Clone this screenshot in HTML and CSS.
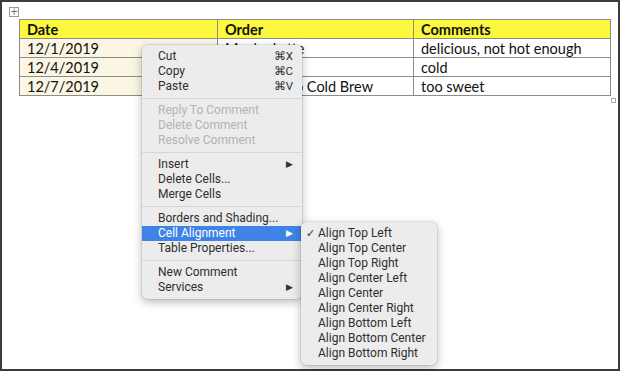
FILE: index.html
```html
<!DOCTYPE html>
<html lang="en">
<head>
    <meta charset="UTF-8">
    <title>Cell Alignment</title>
    <link rel="stylesheet" href="styles.css">
</head>
<body>
    <div class="page">
        <div class="move-handle">+</div>
        <table class="orders">
            <tr class="head">
                <th>Date</th>
                <th>Order</th>
                <th>Comments</th>
            </tr>
            <tr>
                <td class="date">12/1/2019</td>
                <td>Mocha Latte</td>
                <td>delicious, not hot enough</td>
            </tr>
            <tr>
                <td class="date">12/4/2019</td>
                <td>Mocha</td>
                <td>cold</td>
            </tr>
            <tr>
                <td class="date">12/7/2019</td>
                <td>Vanilla Nitro Cold Brew</td>
                <td>too sweet</td>
            </tr>
        </table>
        <div class="resize-handle"></div>

        <div class="menu context">
            <div class="item"><span>Cut</span><span class="key">⌘X</span></div>
            <div class="item"><span>Copy</span><span class="key">⌘C</span></div>
            <div class="item"><span>Paste</span><span class="key">⌘V</span></div>
            <div class="sep"></div>
            <div class="item off">Reply To Comment</div>
            <div class="item off">Delete Comment</div>
            <div class="item off">Resolve Comment</div>
            <div class="sep"></div>
            <div class="item"><span>Insert</span><span class="arrow">▶</span></div>
            <div class="item">Delete Cells...</div>
            <div class="item">Merge Cells</div>
            <div class="sep"></div>
            <div class="item">Borders and Shading...</div>
            <div class="item active"><span>Cell Alignment</span><span class="arrow">▶</span></div>
            <div class="item">Table Properties...</div>
            <div class="sep"></div>
            <div class="item">New Comment</div>
            <div class="item"><span>Services</span><span class="arrow">▶</span></div>
        </div>

        <div class="menu sub">
            <div class="item"><span class="check">✓</span>Align Top Left</div>
            <div class="item">Align Top Center</div>
            <div class="item">Align Top Right</div>
            <div class="item">Align Center Left</div>
            <div class="item">Align Center</div>
            <div class="item">Align Center Right</div>
            <div class="item">Align Bottom Left</div>
            <div class="item">Align Bottom Center</div>
            <div class="item">Align Bottom Right</div>
        </div>
    </div>
</body>
</html>
```

FILE: styles.css
```css
* {
    margin: 0;
    padding: 0;
    box-sizing: border-box;
}

body {
    width: 620px;
    height: 371px;
    background: #fff;
    overflow: hidden;
}

.page {
    position: relative;
    width: 620px;
    height: 371px;
    border: 2px solid #3c3c3c;
    padding: 17px 0 0 17px;
}

.move-handle {
    position: absolute;
    left: 7px;
    top: 5px;
    width: 10px;
    height: 10px;
    border: 1px solid #9a9a9a;
    color: #777;
    font: 10px/8px "DejaVu Sans", sans-serif;
    text-align: center;
}

.orders {
    border-collapse: collapse;
    font-family: Lato, "Open Sans", sans-serif;
    font-size: 14.5px;
    color: #111;
}

.orders th,
.orders td {
    border: 1px solid #8c8c8c;
    height: 19px;
    padding: 0 7px;
    text-align: left;
    line-height: 17px;
    white-space: nowrap;
}

.orders th:nth-child(1) { width: 198px; }
.orders th:nth-child(2) { width: 196px; }
.orders th:nth-child(3) { width: 197px; }

.orders .head th {
    background: #fbf83e;
    font-weight: bold;
}

.orders .date {
    background: #fbf5e3;
}

.resize-handle {
    position: absolute;
    left: 609px;
    top: 96px;
    width: 5px;
    height: 5px;
    border: 1px solid #aaa;
}

.menu {
    position: absolute;
    background: #ececec;
    border-radius: 5px;
    box-shadow: 0 3px 10px rgba(0, 0, 0, 0.28), 0 0 0 0.5px rgba(0, 0, 0, 0.15);
    font-family: Roboto, "Liberation Sans", sans-serif;
    font-size: 12px;
    color: #2e2e2e;
    padding: 4px 0;
}

.context {
    left: 140px;
    top: 43px;
    width: 160px;
}

.sub {
    left: 299px;
    top: 220px;
    width: 136px;
}

.item {
    height: 15px;
    line-height: 15px;
    padding: 0 9px 0 16px;
    display: flex;
    justify-content: space-between;
    white-space: nowrap;
}

.key {
    color: #333;
    font-size: 11.5px;
}

.arrow {
    font-size: 9px;
    color: #333;
}

.item.off {
    color: #b3b3b3;
}

.item.active {
    background: #3f83e6;
    color: #fff;
}

.item.active .arrow {
    color: #fff;
}

.sep {
    height: 1px;
    background: #d6d6d6;
    margin: 4px 0;
}

.sub .item {
    padding-left: 17px;
    position: relative;
    justify-content: flex-start;
}

.check {
    position: absolute;
    left: 5px;
    font-family: "DejaVu Sans", sans-serif;
    font-size: 11px;
    font-weight: bold;
}
```
